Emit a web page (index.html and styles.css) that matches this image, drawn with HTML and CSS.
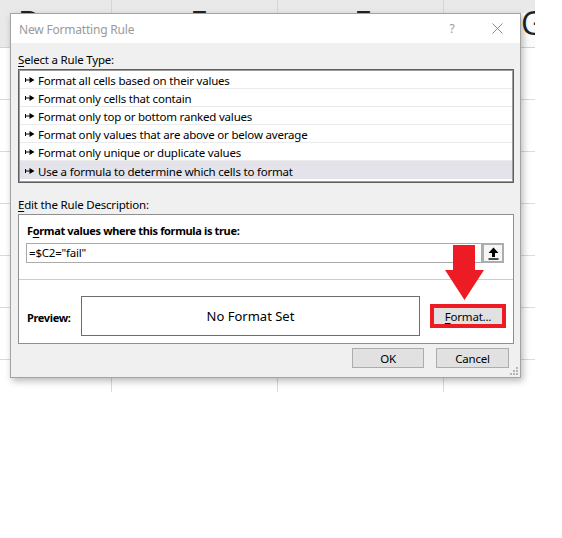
FILE: index.html
```html
<!DOCTYPE html>
<html>
<head>
<meta charset="utf-8">
<title>New Formatting Rule</title>
<link rel="stylesheet" href="styles.css">
</head>
<body>
<div class="screen">
  <div class="sheet">
    <div class="cell hdr c1"><span class="colletter l-d">D</span></div>
    <div class="cell hdr c2"><span class="colletter l-e">E</span></div>
    <div class="cell hdr c3"><span class="colletter l-f">F</span></div>
    <div class="cell hdr c4 hdr-g"><span class="colletter l-g">G</span></div>
    <div class="cell"></div><div class="cell"></div><div class="cell"></div><div class="cell"></div>
    <div class="cell"></div><div class="cell"></div><div class="cell"></div><div class="cell"></div>
    <div class="cell"></div><div class="cell"></div><div class="cell"></div><div class="cell"></div>
    <div class="cell"></div><div class="cell"></div><div class="cell"></div><div class="cell"></div>
    <div class="cell"></div><div class="cell"></div><div class="cell"></div><div class="cell"></div>
    <div class="cell"></div><div class="cell"></div><div class="cell"></div><div class="cell"></div>
    <div class="cell last"></div><div class="cell last"></div><div class="cell last"></div><div class="cell last"></div>
  </div>

  <div class="dialog">
    <div class="titlebar">
      <span class="title">New Formatting Rule</span>
      <span class="help">?</span>
      <span class="close"><svg width="11" height="11" viewBox="0 0 11 11"><path d="M0.5 0.5 L10.5 10.5 M10.5 0.5 L0.5 10.5" stroke="#8a8a8a" stroke-width="1" fill="none"/></svg></span>
    </div>
    <div class="body">
      <div class="label"><u>S</u>elect a Rule Type:</div>
      <div class="list">
        <div class="item"><svg class="bullet" width="10" height="8" viewBox="0 0 10 8"><path d="M0.5 2 V6 M0.5 4 H5" stroke="#000" stroke-width="1" fill="none"/><path d="M4.5 1 L9.5 4 L4.5 7 Z" fill="#000"/></svg><span>Format all cells based on their values</span></div>
        <div class="item"><svg class="bullet" width="10" height="8" viewBox="0 0 10 8"><path d="M0.5 2 V6 M0.5 4 H5" stroke="#000" stroke-width="1" fill="none"/><path d="M4.5 1 L9.5 4 L4.5 7 Z" fill="#000"/></svg><span>Format only cells that contain</span></div>
        <div class="item"><svg class="bullet" width="10" height="8" viewBox="0 0 10 8"><path d="M0.5 2 V6 M0.5 4 H5" stroke="#000" stroke-width="1" fill="none"/><path d="M4.5 1 L9.5 4 L4.5 7 Z" fill="#000"/></svg><span>Format only top or bottom ranked values</span></div>
        <div class="item"><svg class="bullet" width="10" height="8" viewBox="0 0 10 8"><path d="M0.5 2 V6 M0.5 4 H5" stroke="#000" stroke-width="1" fill="none"/><path d="M4.5 1 L9.5 4 L4.5 7 Z" fill="#000"/></svg><span>Format only values that are above or below average</span></div>
        <div class="item"><svg class="bullet" width="10" height="8" viewBox="0 0 10 8"><path d="M0.5 2 V6 M0.5 4 H5" stroke="#000" stroke-width="1" fill="none"/><path d="M4.5 1 L9.5 4 L4.5 7 Z" fill="#000"/></svg><span>Format only unique or duplicate values</span></div>
        <div class="item selected"><svg class="bullet" width="10" height="8" viewBox="0 0 10 8"><path d="M0.5 2 V6 M0.5 4 H5" stroke="#000" stroke-width="1" fill="none"/><path d="M4.5 1 L9.5 4 L4.5 7 Z" fill="#000"/></svg><span>Use a formula to determine which cells to format</span></div>
      </div>
      <div class="label label-edit"><u>E</u>dit the Rule Description:</div>
      <div class="desc">
        <div class="desc-top">
          <div class="bold">F<u>o</u>rmat values where this formula is true:</div>
          <div class="formula-row">
            <div class="input">=$C2="fail"</div>
            <div class="refbtn"><svg width="11" height="13" viewBox="0 0 11 13"><path d="M5.5 0.5 L10.5 6 H7 V10 H4 V6 H0.5 Z" fill="#000"/><path d="M0.5 12 H10.5" stroke="#000" stroke-width="1.4"/></svg></div>
          </div>
        </div>
        <div class="preview-row">
          <div class="bold">Preview:</div>
          <div class="preview-box">No Format Set</div>
          <div class="fmt-frame"><div class="btn fmt"><u>F</u>ormat...</div></div>
        </div>
      </div>
      <div class="buttons">
        <div class="btn ok">OK</div>
        <div class="btn cancel">Cancel</div>
      </div>
    </div>
    <svg class="grip" width="8" height="8" viewBox="0 0 8 8"><g fill="#b5b5b5"><rect x="6" y="0" width="2" height="2"/><rect x="3" y="3" width="2" height="2"/><rect x="6" y="3" width="2" height="2"/><rect x="0" y="6" width="2" height="2"/><rect x="3" y="6" width="2" height="2"/><rect x="6" y="6" width="2" height="2"/></g></svg>
  </div>

  <svg class="red-arrow" width="40" height="56" viewBox="0 0 40 56"><path d="M8 0 H30 V25 H39 L19.5 55 L0 25 H8 Z" fill="#ed1c24"/></svg>
</div>
</body>
</html>
```

FILE: styles.css
```css
* { box-sizing: border-box; }

html, body {
  margin: 0;
  padding: 0;
  background: #ffffff;
}

.screen {
  position: relative;
  width: 562px;
  height: 538px;
  overflow: hidden;
  font-family: "Noto Sans", "Open Sans", sans-serif;
  font-size: 11.5px;
  letter-spacing: -0.2px;
  color: #000;
}

/* background spreadsheet */
.sheet {
  display: grid;
  grid-template-columns: 112px 166px 166px 91px;
  grid-template-rows: 48px repeat(6, 52px) 32px;
  width: 535px;
  height: 392px;
  background: #ffffff;
}

.cell {
  border-right: 1px solid #dadada;
  border-bottom: 1px solid #dadada;
  overflow: hidden;
}

.cell.last { border-bottom: none; }

.hdr {
  background: #e9e9e9;
  border-bottom-color: #d2d2d2;
  border-right-color: #d6d6d6;
}

.hdr-g {
  background: linear-gradient(#e9e9e9 0 13px, #fbfbfb 13px);
}

.c4, .cell:nth-child(4n) { border-right: none; }

.colletter {
  display: block;
  font-family: "Open Sans", sans-serif;
  font-size: 32px;
  line-height: 32px;
  padding-top: 7px;
  color: #222;
  letter-spacing: 0;
}

.l-d { padding-left: 18px; }
.l-e { padding-left: 78px; }
.l-f { padding-left: 76px; }
.l-g { padding-left: 77px; }

/* dialog window */
.dialog {
  position: absolute;
  left: 10px;
  top: 13px;
  width: 511px;
  height: 365px;
  border: 1px solid #a3a3a3;
  background: #f0f0f0;
  box-shadow: 2px 3px 7px rgba(0, 0, 0, 0.28);
  display: flex;
  flex-direction: column;
}

.titlebar {
  height: 29px;
  background: #ffffff;
  display: flex;
  align-items: center;
}

.title {
  flex: 1;
  padding-left: 8px;
  color: #9a9a9a;
  font-size: 12px;
  padding-top: 1px;
}

.help {
  width: 30px;
  text-align: center;
  color: #9a9a9a;
  font-size: 12px;
  margin-right: 7px;
}

.close {
  width: 46px;
  height: 29px;
  display: flex;
  align-items: center;
  justify-content: center;
}

.body {
  flex: 1;
  padding: 9px 6px 0 7px;
  display: flex;
  flex-direction: column;
}

.label {
  height: 16px;
  line-height: 16px;
  margin-bottom: 1px;
}

.label-edit { margin-top: 14px; }

u {
  text-decoration: underline;
  text-underline-offset: 2px;
  text-decoration-thickness: 1px;
}

.list {
  height: 114px;
  background: #ffffff;
  border: 1px solid #5f5f5f;
  box-shadow: inset 0 0 0 1px #9c9c9c;
  padding: 1px 1px 2px 1px;
}

.item {
  height: 18px;
  display: flex;
  align-items: center;
  padding-left: 5px;
  padding-top: 1px;
  border-bottom: 1px solid #ebebeb;
  white-space: nowrap;
  overflow: hidden;
}

.item span { padding-left: 3px; padding-top: 1px; }

.item.selected {
  background: #e3e3e9;
  border-bottom: none;
}

.bullet { flex: none; }

.desc {
  height: 130px;
  background: #ffffff;
  border: 1px solid #8f8f8f;
  display: flex;
  flex-direction: column;
}

.desc-top {
  padding: 8px 9px 16px 8px;
  border-bottom: 1px solid #cdcdcd;
}

.bold {
  font-weight: bold;
  font-size: 11px;
  height: 16px;
  line-height: 16px;
  letter-spacing: -0.35px;
}

.formula-row {
  display: flex;
  margin-top: 4px;
  height: 20px;
}

.input {
  flex: 1;
  margin-left: -1px;
  border: 1px solid #ababab;
  padding-left: 2px;
  line-height: 18px;
  white-space: nowrap;
}

.refbtn {
  width: 22px;
  height: 20px;
  border: 2px solid #adadad;
  background: #f6f6f6;
  display: flex;
  align-items: center;
  justify-content: center;
}

.preview-row {
  display: flex;
  align-items: center;
  padding: 16px 7px 6px 8px;
}

.preview-row .bold { width: 54px; padding-top: 2px; }

.preview-box {
  width: 339px;
  height: 40px;
  border: 1px solid #6e6e6e;
  display: flex;
  align-items: center;
  justify-content: center;
  font-size: 13px;
  letter-spacing: 0;
}

.fmt-frame {
  margin-left: 10px;
  width: 76px;
  height: 24px;
  border: 4px solid #ed1c24;
  background: #e1e1e1;
}

.btn {
  display: flex;
  align-items: center;
  justify-content: center;
  background: #e1e1e1;
  border: 1px solid #adadad;
  height: 20px;
}

.btn.fmt {
  border: none;
  height: 16px;
  padding-top: 1px;
}

.buttons {
  display: flex;
  justify-content: flex-end;
  gap: 12px;
  margin-top: 4px;
  padding-right: 5px;
}

.ok { width: 72px; }
.cancel { width: 73px; }

.grip {
  position: absolute;
  right: 2px;
  bottom: 2px;
}

/* annotation arrow over the screenshot */
.red-arrow {
  position: absolute;
  left: 445px;
  top: 245px;
}
```
